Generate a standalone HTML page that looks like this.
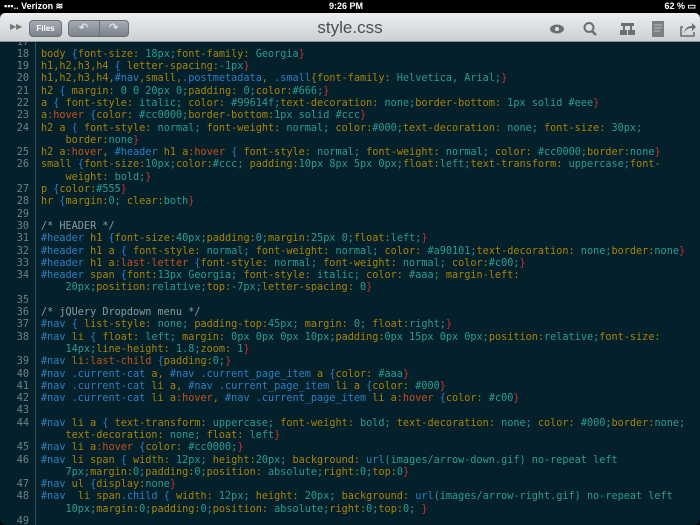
<!DOCTYPE html>
<html><head><meta charset="utf-8"><style>
*{margin:0;padding:0;box-sizing:border-box}
body{width:700px;height:525px;overflow:hidden;background:#000;font-family:"Liberation Sans",sans-serif;position:relative}
#status{position:absolute;top:0;left:0;width:700px;height:14px;background:#000;color:#fff;font-size:9px;font-weight:bold;line-height:13px}
#app{position:absolute;top:13px;left:0;width:700px;height:512px;background:#04212b;border-radius:5px 5px 6px 6px;overflow:hidden}
#tb{position:absolute;top:0;left:0;width:700px;height:29px;background:linear-gradient(#eceef0,#cdd0d4);border-bottom:1px solid #8a9096;z-index:5}
#code{position:absolute;top:23.5px;left:0;width:700px;font-family:"DejaVu Sans Mono","Liberation Mono",monospace;font-size:10.2px;line-height:12.3px;color:#2a9d8f}
.row{height:12.3px;position:relative}
.n{position:absolute;left:0;width:29px;text-align:right;color:#6f8087}
.t{position:absolute;left:41px;white-space:pre}
#gl{position:absolute;left:35px;top:29px;width:1px;height:500px;background:#3a5058}
.y{color:#a88208}.c{color:#2a9d8f}.b{color:#2b7fc4}.r{color:#cc2f2b}.o{color:#c4501b}.g{color:#8a9a9c}
.btn{position:absolute;top:7px;height:17px;border-radius:4px;background:linear-gradient(#a7acb3,#7b828b);border:1px solid #6a7079;color:#fff;font-size:8px;font-weight:bold;text-align:center;line-height:15px}
</style></head><body>
<div id="status"><span style="position:absolute;left:4px">▪▪▪.. Verizon ≋</span><span style="position:absolute;left:329px">9:26 PM</span><span style="position:absolute;right:4px">62 % ▭</span></div>
<div id="app">
<div id="tb">
<span style="position:absolute;left:10px;top:9px;color:#777;font-size:8px">▶▶</span>
<div class="btn" style="left:29px;width:33px">Files</div>
<div class="btn" style="left:68px;width:61px;color:#dde">
<span style="position:absolute;left:10px;top:0;font-size:11px">↶</span>
<span style="position:absolute;left:30px;top:0;width:1px;height:15px;background:#6a7079"></span>
<span style="position:absolute;left:40px;top:0;font-size:11px">↷</span></div>
<div style="position:absolute;left:0;width:700px;top:5px;text-align:center;font-size:17px;color:#4b4f55">style.css</div>
<svg style="position:absolute;left:548px;top:8px" width="150" height="16" viewBox="0 0 150 16">
<ellipse cx="9" cy="8" rx="7" ry="4.5" fill="#6b6f74"/><circle cx="9" cy="8" r="2" fill="#e0e2e5"/>
<circle cx="41" cy="6.5" r="4.5" fill="none" stroke="#6b6f74" stroke-width="2"/><path d="M44 10l4 4" stroke="#6b6f74" stroke-width="2.5"/>
<path d="M73 2h13v3h-13zM75 5h2v4h-2zM82 5h2v4h-2zM72 9h7v5h-7zM80 9h7v5h-7z" fill="#6b6f74"/>
<rect x="104" y="0" width="12" height="16" fill="#7a7f86"/><path d="M106 4h8M106 7h8M106 10h6" stroke="#bbb" stroke-width="1"/>
<path d="M135 6h-2v9h13v-4" fill="none" stroke="#6b6f74" stroke-width="1.6"/><path d="M136 12c1-5 4-7 8-7v-3l4 4-4 4v-3c-3 0-6 1-8 5z" fill="#6b6f74"/>
</svg>
</div>
<div id="gl"></div>
<div id="code">
<div class="row"><span class="n">17</span><span class="t"> </span></div>
<div class="row"><span class="n">18</span><span class="t"><span class="y">body </span><span class="b">{</span><span class="y">font-size:</span> 18px;<span class="y">font-family:</span> Georgia<span class="r">}</span></span></div>
<div class="row"><span class="n">19</span><span class="t"><span class="y">h1,h2,h3,h4 </span><span class="b">{</span><span class="y"> letter-spacing:</span>-1px<span class="r">}</span></span></div>
<div class="row"><span class="n">20</span><span class="t"><span class="y">h1,h2,h3,h4,</span><span class="b">#nav</span><span class="y">,small,</span><span class="b">.postmetadata</span><span class="y">, </span><span class="b">.small</span><span class="y">{font-family:</span> Helvetica, Arial;<span class="r">}</span></span></div>
<div class="row"><span class="n">21</span><span class="t"><span class="y">h2 </span><span class="b">{</span><span class="y"> margin:</span> 0 0 20px 0;<span class="y">padding:</span> 0;<span class="y">color:</span>#666;<span class="r">}</span></span></div>
<div class="row"><span class="n">22</span><span class="t"><span class="y">a </span><span class="b">{</span><span class="y"> font-style:</span> italic; <span class="y">color:</span> #99614f;<span class="y">text-decoration:</span> none;<span class="y">border-bottom:</span> 1px solid #eee<span class="r">}</span></span></div>
<div class="row"><span class="n">23</span><span class="t"><span class="y">a</span><span class="o">:hover</span> <span class="b">{</span><span class="y">color:</span> #cc0000;<span class="y">border-bottom:</span>1px solid #ccc<span class="r">}</span></span></div>
<div class="row"><span class="n">24</span><span class="t"><span class="y">h2 a </span><span class="b">{</span><span class="y"> font-style:</span> normal; <span class="y">font-weight:</span> normal; <span class="y">color:</span>#000;<span class="y">text-decoration:</span> none; <span class="y">font-size:</span> 30px;</span></div>
<div class="row"><span class="n"></span><span class="t">    <span class="y">border:</span>none<span class="r">}</span></span></div>
<div class="row"><span class="n">25</span><span class="t"><span class="y">h2 a</span><span class="o">:hover</span><span class="y">, </span><span class="b">#header</span><span class="y"> h1 a</span><span class="o">:hover</span> <span class="b">{</span><span class="y"> font-style:</span> normal; <span class="y">font-weight:</span> normal; <span class="y">color:</span> #cc0000;<span class="y">border:</span>none<span class="r">}</span></span></div>
<div class="row"><span class="n">26</span><span class="t"><span class="y">small </span><span class="b">{</span><span class="y">font-size:</span>10px;<span class="y">color:</span>#ccc; <span class="y">padding:</span>10px 8px 5px 0px;<span class="y">float:</span>left;<span class="y">text-transform:</span> uppercase;<span class="y">font-</span></span></div>
<div class="row"><span class="n"></span><span class="t">    <span class="y">weight:</span> bold;<span class="r">}</span></span></div>
<div class="row"><span class="n">27</span><span class="t"><span class="y">p </span><span class="b">{</span><span class="y">color:</span>#555<span class="r">}</span></span></div>
<div class="row"><span class="n">28</span><span class="t"><span class="y">hr </span><span class="b">{</span><span class="y">margin:</span>0; <span class="y">clear:</span>both<span class="r">}</span></span></div>
<div class="row"><span class="n">29</span><span class="t"> </span></div>
<div class="row"><span class="n">30</span><span class="t g">/* HEADER */</span></div>
<div class="row"><span class="n">31</span><span class="t"><span class="b">#header</span><span class="y"> h1 </span><span class="b">{</span><span class="y">font-size:</span>40px;<span class="y">padding:</span>0;<span class="y">margin:</span>25px 0;<span class="y">float:</span>left;<span class="r">}</span></span></div>
<div class="row"><span class="n">32</span><span class="t"><span class="b">#header</span><span class="y"> h1 a </span><span class="b">{</span><span class="y"> font-style:</span> normal; <span class="y">font-weight:</span> normal; <span class="y">color:</span> #a90101;<span class="y">text-decoration:</span> none;<span class="y">border:</span>none<span class="r">}</span></span></div>
<div class="row"><span class="n">33</span><span class="t"><span class="b">#header</span><span class="y"> h1 a</span><span class="o">:last-letter</span> <span class="b">{</span><span class="y">font-style:</span> normal; <span class="y">font-weight:</span> normal; <span class="y">color:</span>#c00;<span class="r">}</span></span></div>
<div class="row"><span class="n">34</span><span class="t"><span class="b">#header</span><span class="y"> span </span><span class="b">{</span><span class="y">font:</span>13px Georgia; <span class="y">font-style:</span> italic; <span class="y">color:</span> #aaa; <span class="y">margin-left:</span></span></div>
<div class="row"><span class="n"></span><span class="t">    20px;<span class="y">position:</span>relative;<span class="y">top:</span>-7px;<span class="y">letter-spacing:</span> 0<span class="r">}</span></span></div>
<div class="row"><span class="n">35</span><span class="t"> </span></div>
<div class="row"><span class="n">36</span><span class="t g">/* jQUery Dropdown menu */</span></div>
<div class="row"><span class="n">37</span><span class="t"><span class="b">#nav</span> <span class="b">{</span><span class="y"> list-style:</span> none; <span class="y">padding-top:</span>45px; <span class="y">margin:</span> 0; <span class="y">float:</span>right;<span class="r">}</span></span></div>
<div class="row"><span class="n">38</span><span class="t"><span class="b">#nav</span><span class="y"> li </span><span class="b">{</span><span class="y"> float:</span> left; <span class="y">margin:</span> 0px 0px 0px 10px;<span class="y">padding:</span>0px 15px 0px 0px;<span class="y">position:</span>relative;<span class="y">font-size:</span></span></div>
<div class="row"><span class="n"></span><span class="t">    14px;<span class="y">line-height:</span> 1.8;<span class="y">zoom:</span> 1<span class="r">}</span></span></div>
<div class="row"><span class="n">39</span><span class="t"><span class="b">#nav</span><span class="y"> li</span><span class="o">:last-child</span> <span class="b">{</span><span class="y">padding:</span>0;<span class="r">}</span></span></div>
<div class="row"><span class="n">40</span><span class="t"><span class="b">#nav .current-cat</span><span class="y"> a, </span><span class="b">#nav .current_page_item</span><span class="y"> a </span><span class="b">{</span><span class="y">color:</span> #aaa<span class="r">}</span></span></div>
<div class="row"><span class="n">41</span><span class="t"><span class="b">#nav .current-cat</span><span class="y"> li a, </span><span class="b">#nav .current_page_item</span><span class="y"> li a </span><span class="b">{</span><span class="y">color:</span> #000<span class="r">}</span></span></div>
<div class="row"><span class="n">42</span><span class="t"><span class="b">#nav .current-cat</span><span class="y"> li a</span><span class="o">:hover</span><span class="y">, </span><span class="b">#nav .current_page_item</span><span class="y"> li a</span><span class="o">:hover</span> <span class="b">{</span><span class="y">color:</span> #c00<span class="r">}</span></span></div>
<div class="row"><span class="n">43</span><span class="t"> </span></div>
<div class="row"><span class="n">44</span><span class="t"><span class="b">#nav</span><span class="y"> li a </span><span class="b">{</span><span class="y"> text-transform:</span> uppercase; <span class="y">font-weight:</span> bold; <span class="y">text-decoration:</span> none; <span class="y">color:</span> #000;<span class="y">border:</span>none;</span></div>
<div class="row"><span class="n"></span><span class="t">    <span class="y">text-decoration:</span> none; <span class="y">float:</span> left<span class="r">}</span></span></div>
<div class="row"><span class="n">45</span><span class="t"><span class="b">#nav</span><span class="y"> li a</span><span class="o">:hover</span> <span class="b">{</span><span class="y">color:</span> #cc0000;<span class="r">}</span></span></div>
<div class="row"><span class="n">46</span><span class="t"><span class="b">#nav</span><span class="y"> li span </span><span class="b">{</span><span class="y"> width:</span> 12px; <span class="y">height:</span>20px; <span class="y">background:</span> <span class="b">url</span>(images/arrow-down.gif) no-repeat left</span></div>
<div class="row"><span class="n"></span><span class="t">    7px;<span class="y">margin:</span>0;<span class="y">padding:</span>0;<span class="y">position:</span> absolute;<span class="y">right:</span>0;<span class="y">top:</span>0<span class="r">}</span></span></div>
<div class="row"><span class="n">47</span><span class="t"><span class="b">#nav</span><span class="y"> ul </span><span class="b">{</span><span class="y">display:</span>none<span class="r">}</span></span></div>
<div class="row"><span class="n">48</span><span class="t"><span class="b">#nav</span><span class="y">  li span</span><span class="b">.child</span> <span class="b">{</span><span class="y"> width:</span> 12px; <span class="y">height:</span> 20px; <span class="y">background:</span> <span class="b">url</span>(images/arrow-right.gif) no-repeat left</span></div>
<div class="row"><span class="n"></span><span class="t">    10px;<span class="y">margin:</span>0;<span class="y">padding:</span>0;<span class="y">position:</span> absolute;<span class="y">right:</span>0;<span class="y">top:</span>0; <span class="r">}</span></span></div>
<div class="row"><span class="n">49</span><span class="t"> </span></div>
</div>
</div>
</body></html>
